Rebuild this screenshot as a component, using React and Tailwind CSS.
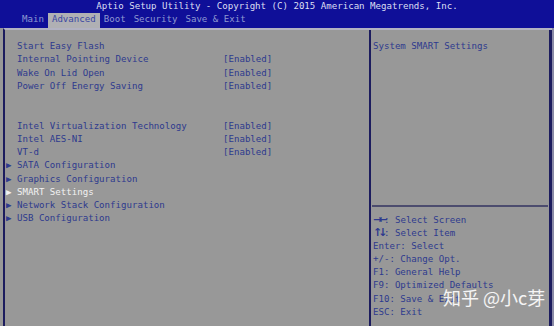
import React from 'react'

const items = [
  { label: 'Start Easy Flash' },
  { label: 'Internal Pointing Device', value: '[Enabled]' },
  { label: 'Wake On Lid Open', value: '[Enabled]' },
  { label: 'Power Off Energy Saving', value: '[Enabled]' },
  { label: '' },
  { label: '' },
  { label: 'Intel Virtualization Technology', value: '[Enabled]' },
  { label: 'Intel AES-NI', value: '[Enabled]' },
  { label: 'VT-d', value: '[Enabled]' },
  { label: 'SATA Configuration', sub: true },
  { label: 'Graphics Configuration', sub: true },
  { label: 'SMART Settings', sub: true, active: true },
  { label: 'Network Stack Configuration', sub: true },
  { label: 'USB Configuration', sub: true },
]

const keys = [
  ['→←', ': Select Screen'],
  ['↑↓', ': Select Item'],
  ['', 'Enter: Select'],
  ['', '+/-: Change Opt.'],
  ['', 'F1: General Help'],
  ['', 'F9: Optimized Defaults'],
  ['', 'F10: Save & Exit'],
  ['', 'ESC: Exit'],
]

const tabs = ['Main', 'Advanced', 'Boot', 'Security', 'Save & Exit']

export default function App() {
  return (
    <div
      className="relative flex h-[326px] w-[554px] flex-col overflow-hidden bg-[#989898] text-[9.1px] text-[#2e3a8e]"
      style={{ fontFamily: '"DejaVu Sans Mono", "Liberation Mono", monospace' }}
    >
      <div className="flex h-[28px] flex-col bg-[#0f0f98]">
        <div className="h-[12px] text-center leading-[12px] text-[#dcdff2]">
          Aptio Setup Utility - Copyright (C) 2015 American Megatrends, Inc.
        </div>
        <div className="flex h-[16px] items-center pl-[18px]">
          {tabs.map((tab) =>
            tab === 'Advanced' ? (
              <div key={tab} className="flex h-[15px] items-center bg-[#b0b0b4] px-[4px] text-[#3a46a2]">
                {tab}
              </div>
            ) : (
              <div key={tab} className="flex h-[15px] items-center px-[4px] text-[#8e98d2]">
                {tab}
              </div>
            ),
          )}
        </div>
      </div>

      <div className="flex flex-1 pl-[3px]">
        <div className="flex flex-1 border-l-2 border-t-2 border-[#1c1c5e] border-t-[#b2b2c2]">
          <div className="w-[364px] pt-[10px]">
            {items.map((item, i) => (
              <div key={i} className="flex h-[13.25px] items-center leading-[13.25px]">
                <div className={`w-[12px] pl-[1px] text-[9px] ${item.active ? 'text-[#f2f2f2]' : 'text-[#2e3a8e]'}`}>
                  {item.sub ? '▶' : ''}
                </div>
                <div className={`w-[206px] whitespace-pre ${item.active ? 'text-[#f2f2f2]' : ''}`}>{item.label}</div>
                <div>{item.value}</div>
              </div>
            ))}
          </div>

          <div className="flex w-[180px] flex-col border-l-2 border-[#1c1c5e]">
            <div className="h-[175px] pl-[2px] pt-[10px] leading-[13.25px]">System SMART Settings</div>
            <div className="mx-[1px] h-[2px] bg-[#4c4c6e]" />
            <div className="pl-[2px] pt-[6px]">
              {keys.map(([a, b], i) => (
                <div key={i} className="h-[13.25px] whitespace-pre leading-[13.25px]">
                  {a ? (
                    <span
                      className="inline-block w-[11px] text-[11px] font-bold tracking-[-4px]"
                      style={{ fontFamily: '"DejaVu Sans", sans-serif' }}
                    >
                      {a}
                    </span>
                  ) : null}
                  {b}
                </div>
              ))}
            </div>
          </div>

          <div className="w-[3px] bg-[#1c1c5e]" />
        </div>
        <div className="w-[3px] bg-[#8a8aa6]" />
      </div>

      <div
        className="absolute left-[443px] top-[285px] text-[18px] leading-[24px] text-white/90"
        style={{ fontFamily: '"Noto Sans CJK SC", "Noto Sans", sans-serif' }}
      >
        知乎 @小c芽
      </div>
    </div>
  )
}
